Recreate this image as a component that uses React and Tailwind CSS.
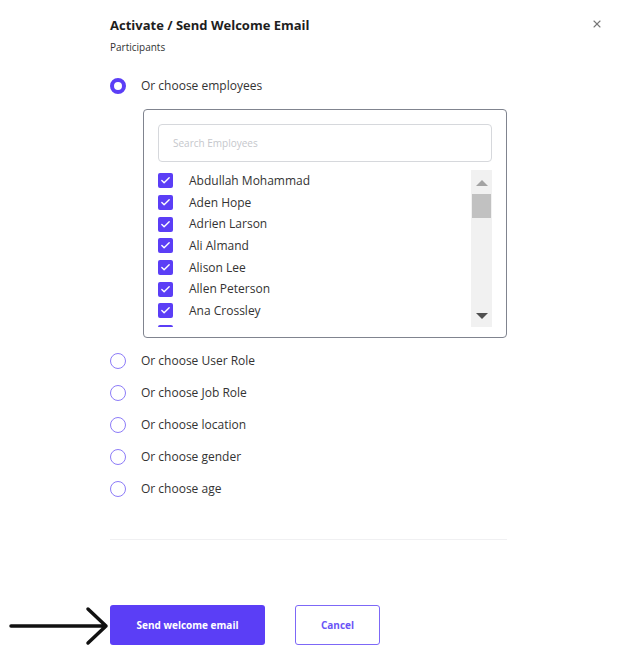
import { Check, X } from "lucide-react";

const EMPLOYEES = [
  "Abdullah Mohammad",
  "Aden Hope",
  "Adrien Larson",
  "Ali Almand",
  "Alison Lee",
  "Allen Peterson",
  "Ana Crossley",
  "Andrew Gray",
];

const OPTIONS = [
  "Or choose User Role",
  "Or choose Job Role",
  "Or choose location",
  "Or choose gender",
  "Or choose age",
];

function Radio({ checked }) {
  return checked ? (
    <span className="h-4 w-4 rounded-full border-[4.5px] border-[#5b3ef6] bg-white" />
  ) : (
    <span className="h-4 w-4 rounded-full border-[1.5px] border-[#8d7cf8] bg-white" />
  );
}

export default function App() {
  return (
    <div
      className="relative h-[658px] w-[618px] overflow-hidden bg-white text-[#2b2b2b]"
      style={{ fontFamily: "'Open Sans', 'Noto Sans', sans-serif" }}
    >
      <div className="flex flex-col pl-[110px] pr-[111px] pt-[16px]">
        {/* Header */}
        <h2 className="text-[13px] font-bold leading-[18px] text-[#1e1e1e]">
          Activate / Send Welcome Email
        </h2>
        <p className="mt-[6px] text-[10px] leading-[14px] text-[#333]">Participants</p>

        {/* Employees option */}
        <div className="mt-[24px] flex items-center gap-[15px]">
          <Radio checked />
          <span className="text-[12px] leading-[16px] text-[#333]">Or choose employees</span>
        </div>

        <div className="ml-[33px] mt-[15px] h-[229px] rounded-[4px] border border-[#80848f] px-[14px] pt-[14px]">
          <div className="flex h-[38px] items-center rounded-[4px] border border-[#d6d8dc] px-[14px]">
            <span className="text-[10px] text-[#c5c7cc]">Search Employees</span>
          </div>
          <div className="mt-[8px] flex h-[157px] gap-[4px]">
            <ul className="flex flex-1 flex-col overflow-hidden">
              {EMPLOYEES.map((name) => (
                <li key={name} className="flex h-[21.7px] shrink-0 items-center gap-[16px]">
                  <span className="flex h-[15px] w-[15px] items-center justify-center rounded-[2px] bg-[#5b3ef6]">
                    <Check size={11} strokeWidth={3} className="text-white" />
                  </span>
                  <span className="text-[12px] leading-[16px] text-[#333]">{name}</span>
                </li>
              ))}
            </ul>
            <div className="flex w-[21px] flex-col items-center bg-[#f1f1f1]">
              <div className="mt-[10px] h-0 w-0 border-x-[6px] border-b-[6px] border-x-transparent border-b-[#a3a3a3]" />
              <div className="mt-[8px] h-[24px] w-[19px] bg-[#c1c1c1]" />
              <div className="flex-1" />
              <div className="mb-[8px] h-0 w-0 border-x-[6px] border-t-[6px] border-x-transparent border-t-[#505050]" />
            </div>
          </div>
        </div>

        {/* Other options */}
        <div className="mt-[15px] flex flex-col gap-[16px]">
          {OPTIONS.map((label) => (
            <div key={label} className="flex h-[16px] items-center gap-[15px]">
              <Radio />
              <span className="text-[12px] leading-[16px] text-[#333]">{label}</span>
            </div>
          ))}
        </div>

        <div className="mt-[42px] h-px bg-[#f0f0f2]" />

        {/* Actions */}
        <div className="mt-[65px] flex gap-[30px]">
          <button className="h-[40px] w-[155px] rounded-[3px] bg-[#5b3ef6] text-[10px] font-bold text-white">
            Send welcome email
          </button>
          <button className="h-[40px] w-[85px] rounded-[3px] border border-[#7d68f7] bg-white text-[10px] font-bold text-[#6a55f6]">
            Cancel
          </button>
        </div>
      </div>

      {/* Close */}
      <button className="absolute right-[15px] top-[18px] text-[#777]">
        <X size={12} strokeWidth={2.2} />
      </button>

      {/* Pointer arrow */}
      <svg className="absolute left-[8px] top-[606px]" width="102" height="40" viewBox="0 0 102 40">
        <path d="M3 20 H98 M80 3 L98 20 L80 37" fill="none" stroke="#111" strokeWidth="3.5" strokeLinecap="round" strokeLinejoin="round" />
      </svg>
    </div>
  );
}
